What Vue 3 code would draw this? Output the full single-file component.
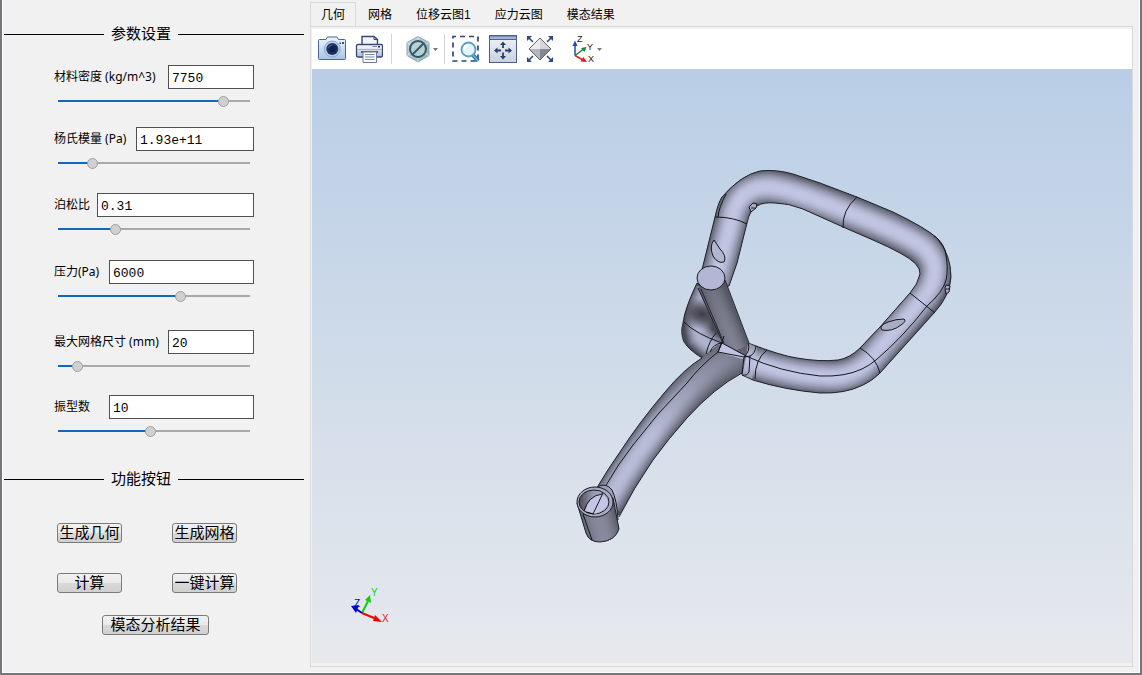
<script setup>
import { reactive, ref } from 'vue'

const fields = reactive([
  { id: 'density', label: '材料密度 (kg/m^3)', value: '7750', pos: 885, size: 'wide' },
  { id: 'young', label: '杨氏模量 (Pa)', value: '1.93e+11', pos: 160, size: 'medium' },
  { id: 'poisson', label: '泊松比', value: '0.31', pos: 285, size: 'narrow' },
  { id: 'pressure', label: '压力(Pa)', value: '6000', pos: 646, size: 'short' },
  { id: 'mesh', label: '最大网格尺寸 (mm)', value: '20', pos: 75, size: 'wide' },
  { id: 'modes', label: '振型数', value: '10', pos: 480, size: 'short' },
])

const tabs = ['几何', '网格', '位移云图1', '应力云图', '模态结果']
const active = ref(0)

// Concentric strokes, dark at the rim and light at the core, that shade a tube.
function shades(width, from, to, steps = 16) {
  return Array.from({ length: steps }, (_, i) => {
    const t = i / (steps - 1)
    const k = Math.sin((t * Math.PI) / 2)
    const mix = from.map((c, n) => Math.round(c + (to[n] - c) * k))
    return { w: (width * (1 - t * 0.92)).toFixed(1), c: `rgb(${mix.join(',')})` }
  })
}

const rim = [80, 82, 96]
const ringShades = shades(36, rim, [193, 197, 226])
const handleShades = shades(37, rim, [184, 188, 215])
const stemShades = shades(28, [78, 80, 94], [130, 132, 150])
const lobeShades = shades(30, [66, 68, 80], [176, 179, 206])
const cupShades = shades(40, [84, 86, 100], [136, 138, 156])

const ringTop =
  'M729 286 L737 263 L747 223 Q750 209 757 206 Q763 202 775 203 Q788 203 803 209 L843 227 L873 240 Q889 247 900 253 Q921 264 920 274 Q918 284 910 293 L880 327 L860 348 Q850 358 838 360 Q820 362 797 358 Q782 356 748 343 L742 375 L753 380 Q785 390 820 393 Q845 394 863 385 Q872 381 880 373 L934 313 Q950 296 951 277 Q951 255 937 238 Q926 228 893 212 L857 197 L820 183 L793 174 Q776 169 760 171 Q741 175 722 197 Q718 203 715 217 L697 290 Z'
const ringAxis =
  'M713 290 L731 222 Q737 187 768 187 Q785 187 850 213 Q910 236 924 248 Q945 268 925 296 L870 360 Q855 377 830 377 Q790 376 742 359'
const handleLeft = 'Q684 369 665 392 Q638 424 620 452 Q608 469 598 486'
const handleRight = 'L619 517 Q633 489 653 460 Q669 438 687 418 Q714 388 742 373'
const handle = `M718 345 L702 358 ${handleLeft} L612 500 ${handleRight} L748 345 Z`
const handleAxis = 'M740 352 Q709 366 678 402 Q640 446 606 503'
const lobe = 'M697 283 Q690 298 687 307 Q684 315 683 323 Q680 333 684 342 Q689 350 702 358 L722 352 L725 340 L705 290 Z'
const lobeAxis = 'M707 290 Q694 320 700 337 Q712 349 730 357'
const stem = 'M698 288 L723 343 L721 349 L744 355 L749 343 L725 280 Z'
const cup = 'M577 503 L586 533 Q589 542 600 542 Q615 541 619 529 L613 498 Z'
</script>

<template>
  <main class="window">
    <aside class="sidebar">
      <h2 class="title"><span>参数设置</span></h2>
      <form class="fields" @submit.prevent>
        <div v-for="f in fields" :key="f.id" class="field">
          <div class="line">
            <label :for="f.id" :class="f.size">{{ f.label }}</label>
            <input :id="f.id" v-model="f.value" type="text" class="box" />
          </div>
          <input
            v-model.number="f.pos"
            type="range"
            min="0"
            max="1000"
            class="slider"
            :aria-label="f.label"
            :style="{ '--fill': f.pos / 10 + '%' }"
          />
        </div>
      </form>
      <h2 class="title"><span>功能按钮</span></h2>
      <div class="actions">
        <button type="button">生成几何</button>
        <button type="button">生成网格</button>
        <button type="button">计算</button>
        <button type="button">一键计算</button>
        <button type="button" class="result">模态分析结果</button>
      </div>
    </aside>

    <section class="work">
      <nav class="tabs" role="tablist">
        <button
          v-for="(t, i) in tabs"
          :key="t"
          type="button"
          role="tab"
          class="tab"
          :class="{ on: active === i }"
          :aria-selected="active === i"
          @click="active = i"
        >{{ t }}</button>
      </nav>

      <div class="pane">
        <div class="toolbar">
          <div class="group">
            <button type="button" class="tool" aria-label="截图">
              <svg width="28" height="28" viewBox="0 0 28 28">
                <defs>
                  <linearGradient id="cam" x1="0" y1="0" x2="0" y2="1">
                    <stop offset="0" stop-color="#eef5fc" /><stop offset="1" stop-color="#aac4e2" />
                  </linearGradient>
                </defs>
                <path d="M1.5 4.5H8L9.5 2H19L20.5 4.5H26.5Q27.500 4.500 27.500 5.500V23.500Q27.500 24.500 26.500 24.500H1.500Q.5 24.500.5 23.500V5.500Q.5 4.500 1.500 4.500Z" fill="url(#cam)" stroke="#4d6796" />
                <circle cx="14.300" cy="14" r="8" fill="#b9cce4" stroke="#90a8ca" />
                <circle cx="14.300" cy="14" r="6" fill="#1b3264" />
                <circle cx="14.300" cy="14" r="3.500" fill="#0f2250" />
                <path d="M10.500 12.500Q12 10 14.500 10" fill="none" stroke="#4b6aa5" stroke-width="1.200" />
                <rect x="21.500" y="7.500" width="1.500" height="1.500" fill="#34538a" />
                <rect x="24" y="7" width="2" height="2" fill="#34538a" />
              </svg>
            </button>
            <button type="button" class="tool" aria-label="打印">
              <svg width="28" height="28" viewBox="0 0 28 28">
                <defs>
                  <linearGradient id="prn" x1="0" y1="0" x2="0" y2="1">
                    <stop offset="0" stop-color="#fff" /><stop offset="1" stop-color="#aeb9cd" />
                  </linearGradient>
                </defs>
                <path d="M7 10V1.500H19L22.500 4.500V10Z" fill="#f2f4f8" stroke="#384873" stroke-width="1.400" />
                <path d="M19 1.500V4.500H22.500" fill="none" stroke="#384873" />
                <rect x="1.500" y="9.500" width="26" height="12.500" rx="1.500" fill="url(#prn)" stroke="#384873" stroke-width="1.300" />
                <path d="M2 14.500H27" stroke="#a9b3c8" />
                <path d="M17.500 11.500H22" stroke="#7b88a8" />
                <rect x="23" y="11" width="2" height="1.500" fill="#24335f" />
                <path d="M6 17H23" stroke="#24335f" stroke-width="1.500" />
                <path d="M8 17H21.500V27.500H8Z" fill="#f8f9fb" stroke="#6f7d9c" />
                <path d="M10 19.500H19.500M10 22H19.500M10 24.500H19.500" stroke="#7d89a5" />
              </svg>
            </button>
          </div>
          <div class="group drop">
            <button type="button" class="tool" aria-label="显示选项">
              <svg width="28" height="28" viewBox="0 0 28 28">
                <defs>
                  <linearGradient id="hex" x1="0" y1="0" x2="1" y2="1">
                    <stop offset="0" stop-color="#c4dce1" /><stop offset="1" stop-color="#8fb0b9" />
                  </linearGradient>
                </defs>
                <path d="M14 1.500L25 7.500V20.500L14 27L3 20.500V7.500Z" fill="url(#hex)" stroke="#93a3aa" />
                <path d="M14 1.500V27M3 7.500L25 20.500M25 7.500L3 20.500" stroke="#d5e4e7" stroke-width=".8" />
                <circle cx="14" cy="14" r="8" fill="#b8d0d5" stroke="#345765" stroke-width="2" />
                <path d="M19.500 8.500L8.500 19.500" stroke="#345765" stroke-width="2" />
              </svg>
            </button>
            <svg class="caret" width="5" height="3" viewBox="0 0 5 3"><path d="M0 0H5L2.500 3Z" fill="#777" /></svg>
          </div>
          <div class="group last">
            <button type="button" class="tool" aria-label="框选缩放">
              <svg width="28" height="28" viewBox="0 0 28 28">
                <rect x="1" y="1.500" width="25" height="24.500" fill="none" stroke="#31456f" stroke-width="1.700" stroke-dasharray="5 4" stroke-dashoffset="2" />
                <path d="M21 20L26 26" stroke="#2b76ae" stroke-width="4" />
                <path d="M21 20L26 26" stroke="#6ab4df" stroke-width="1.500" />
                <circle cx="16.500" cy="14.500" r="7" fill="#e3f3fb" stroke="#5d9fc7" stroke-width="1.800" />
                <path d="M12.500 14.500Q12.500 11 16 10.500" fill="none" stroke="#fff" stroke-width="2" />
              </svg>
            </button>
            <button type="button" class="tool" aria-label="平移">
              <svg width="28" height="28" viewBox="0 0 28 28">
                <defs>
                  <linearGradient id="pan" x1="0" y1="0" x2="0" y2="1">
                    <stop offset="0" stop-color="#f0f3f8" /><stop offset="1" stop-color="#c9d1e0" />
                  </linearGradient>
                </defs>
                <rect x=".5" y=".5" width="27" height="27" fill="url(#pan)" stroke="#4b6089" />
                <rect x="1" y="1" width="26" height="4" fill="#a3b6d6" />
                <path d="M1 1H27M1 4.500H27" stroke="#4e6594" />
                <path d="M14 9V13M14 17.500V21.500M7.500 15.500H12M16 15.500H20.500" stroke="#2b4069" stroke-width="1.800" />
                <path d="M14 6.500L17 10H11ZM14 24.500L17 21H11ZM5 15.500L8.500 12.500V18.500ZM23 15.500L19.500 12.500V18.500Z" fill="#2b4069" />
              </svg>
            </button>
            <button type="button" class="tool" aria-label="适应窗口">
              <svg width="28" height="28" viewBox="0 0 28 28">
                <path d="M14 3L25 14H3Z" fill="#ececee" />
                <path d="M14 3V14H25Z" fill="#d5d6d9" />
                <path d="M3 14H14V25Z" fill="#b4b6bb" />
                <path d="M14 14H25L14 25Z" fill="#85888f" />
                <path d="M14 3L25 14L14 25L3 14Z" fill="none" stroke="#5c6577" />
                <path d="M2 2L7 7M26 2L21 7M2 26L7 21M26 26L21 21" stroke="#31487a" stroke-width="1.600" />
                <path d="M1 1H6L1 6ZM27 1V6L22 1ZM1 27V22L6 27ZM27 27H22L27 22Z" fill="#31487a" />
              </svg>
            </button>
            <button type="button" class="tool axes" aria-label="视图方向">
              <svg width="26" height="28" viewBox="0 0 26 28">
                <path d="M5 20.500V8" stroke="#2747a5" stroke-width="1.500" />
                <path d="M5 5.500L7.500 11H2.500Z" fill="#2747a5" />
                <path d="M5 20.500L13 14.500" stroke="#168543" stroke-width="1.500" />
                <path d="M16.500 12L14.500 17L11 13Z" fill="#168543" />
                <path d="M5 20.500L13 25" stroke="#e0211d" stroke-width="1.500" />
                <path d="M17 27L10.500 26.500L13.500 22Z" fill="#e0211d" />
                <text x="7" y="7" class="mark">Z</text>
                <text x="17" y="15" class="mark">Y</text>
                <text x="18" y="27" class="mark">X</text>
              </svg>
            </button>
            <svg class="caret" width="5" height="3" viewBox="0 0 5 3"><path d="M0 0H5L2.500 3Z" fill="#777" /></svg>
          </div>
        </div>

        <div class="canvas">
          <svg class="model" viewBox="312 69 820 594" role="img" aria-label="几何模型">
            <defs>
              <clipPath id="cRing"><path :d="ringTop" /></clipPath>
              <clipPath id="cHandle"><path :d="handle" /></clipPath>
              <clipPath id="cLobe"><path :d="lobe" /></clipPath>
              <clipPath id="cStem"><path :d="stem" /></clipPath>
              <clipPath id="cCup"><path :d="cup" /></clipPath>
              <radialGradient id="dark" gradientUnits="userSpaceOnUse" cx="0" cy="0" r="1" gradientTransform="translate(702 314) rotate(12) scale(24 16)">
                <stop offset="0" stop-color="#3c3d46" /><stop offset=".4" stop-color="#474853" stop-opacity=".8" /><stop offset="1" stop-color="#50525f" stop-opacity="0" />
              </radialGradient>
              <linearGradient id="stemDark" gradientUnits="userSpaceOnUse" x1="712" y1="290" x2="735" y2="345">
                <stop offset="0" stop-color="#55565f" stop-opacity=".4" /><stop offset="1" stop-color="#777988" stop-opacity=".2" />
              </linearGradient>
              <linearGradient id="handleDark" gradientUnits="userSpaceOnUse" x1="738" y1="350" x2="650" y2="430">
                <stop offset="0" stop-color="#666876" stop-opacity=".75" /><stop offset="1" stop-color="#666876" stop-opacity="0" />
              </linearGradient>
              <linearGradient id="bore" x1="0" y1="0" x2="1" y2="0">
                <stop offset="0" stop-color="#4a4b56" /><stop offset=".45" stop-color="#9497ad" /><stop offset="1" stop-color="#b4b7d3" />
              </linearGradient>
            </defs>

            <g clip-path="url(#cRing)" fill="none">
              <path :d="ringTop" fill="#505260" />
              <path v-for="(s, i) in ringShades" :key="i" :d="ringAxis" :stroke="s.c" :stroke-width="s.w" />
            </g>
            <path :d="ringTop" class="edge" />

            <g clip-path="url(#cLobe)" fill="none">
              <path :d="lobe" fill="#4c4e5a" />
              <path v-for="(s, i) in lobeShades" :key="i" :d="lobeAxis" :stroke="s.c" :stroke-width="s.w" />
              <rect x="676" y="284" width="54" height="56" fill="url(#dark)" />
            </g>
            <path :d="lobe" class="edge" />

            <g clip-path="url(#cHandle)" fill="none">
              <path :d="handle" fill="#505260" />
              <path v-for="(s, i) in handleShades" :key="i" :d="handleAxis" :stroke="s.c" :stroke-width="s.w" />
              <path :d="handle" fill="url(#handleDark)" />
            </g>
            <path class="edge" :d="`M702 358 ${handleLeft} M619 517 ${handleRight}`" />

            <g clip-path="url(#cStem)" fill="none">
              <path :d="stem" fill="#5a5c69" />
              <path v-for="(s, i) in stemShades" :key="i" d="M708 280L736 350" :stroke="s.c" :stroke-width="s.w" />
              <path :d="stem" fill="url(#stemDark)" />
            </g>
            <path class="edge" d="M698 288L723 343M701 289L724 343M725 280L749 343" />
            <ellipse cx="711" cy="278" rx="14" ry="12" fill="#b3b7d5" class="rim" />

            <path d="M722 343L746 356L743 359L718 352Z" fill="#c0c4e2" />
            <path d="M748 343L757 347L752 379L742 375Z" fill="#b9bddb" opacity=".55" />
            <path class="seam" d="M722 343L746 356Q780 372 820 376Q845 377 862 369Q870 365 876 360M722 343L718 352L744 357L746 356M744 357L742 374M750 356L749 372Q747 376 742 375M748 343Q751 350 744 357M756 346Q755 354 750 356L744 357M767 350Q755 359 755 379M724 336L718 352M684 322Q696 334 722 343M716 333Q709 341 706 354M722 343Q713 344 710 352" />
            <path class="seam" d="M718 352Q700 366 687 383Q658 412 633 445Q618 464 605 487" />

            <path class="seam" d="M715 217Q734 217 747 224M857 197Q842 210 843 228M910 293L935 313M860 348Q876 357 880 373M876 360Q903 337 927 306Q943 292 946 280Q949 268 945 250Q941 240 934 236M718 217Q719 207 726 194" />
            <path class="seam" d="M714 240Q709 246 713 256Q718 264 724 262Q727 256 720 249Z" fill="#b3b6d0" />
            <path class="seam" d="M904 319Q907 321 901 325Q892 332 882 330Q878 326 888 322Q896 319 904 319Z" fill="#a9acc5" />
            <path class="seam" d="M749 207L753 203L757 204L756 208L751 212Z M751 208H755M946 285L950 286L949 292L946 294L945 288Z M946 289H950" fill="#a9acc5" />

            <path d="M597 487Q606 482 612 490Q617 500 618 520L608 510Z" fill="#9da0ba" class="rim" />
            <g clip-path="url(#cCup)" fill="none">
              <path :d="cup" fill="#555764" />
              <path v-for="(s, i) in cupShades" :key="i" d="M592 496L606 546" :stroke="s.c" :stroke-width="s.w" />
            </g>
            <path :d="cup" class="edge" />
            <path class="seam" d="M583 514L592 540" />
            <ellipse cx="595" cy="502" rx="18" ry="15" fill="#a7aac4" class="rim" />
            <ellipse cx="594" cy="502" rx="15" ry="12" fill="url(#bore)" class="rim" />
            <path d="M585 511Q588 498 600 494Q607 496 608 502Q607 511 594 514Z" fill="#c3c7e6" />
            <path class="seam" d="M584 511Q588 496 602 494M603 493L593 514M586 512L594 514" />

            <g stroke-width="2">
              <path d="M362 613L368 601" stroke="#0bd20b" />
              <path d="M370 595L371 603L365 600Z" fill="#0bd20b" />
              <path d="M362 613L374 618" stroke="#f00000" />
              <path d="M382 622L373 621L375 615Z" fill="#f00000" />
              <path d="M362 613L356 609" stroke="#0000d8" />
              <path d="M351 606L359 605L356 613Z" fill="#0000d8" />
            </g>
            <text x="371" y="596" class="axis" fill="#0bd20b">Y</text>
            <text x="382" y="622" class="axis" fill="#e02020">X</text>
            <text x="354" y="607" class="axis" fill="#0000d8">Z</text>
          </svg>
        </div>
      </div>
    </section>
  </main>
</template>

<style>
body {
  background: #f1f1f1;
}
</style>

<style scoped>
* {
  box-sizing: border-box;
}
.window {
  display: flex;
  min-height: 100vh;
  border: 2px solid #75757b;
  border-top: 0;
  background: #f1f1f1;
  box-shadow: inset 1px 0 #fff, inset -1px -1px #fff;
  color: #000;
  font-family: "Liberation Sans", "Noto Sans CJK SC", sans-serif;
}
.sidebar {
  flex: 0 0 308px;
  padding: 24px 6px 0 2px;
}
.title {
  display: flex;
  align-items: center;
  gap: 7px;
  margin: 0;
  font-size: 15px;
  font-weight: 400;
  line-height: 20px;
}
.title::before,
.title::after {
  content: "";
  height: 1px;
  background: #000;
}
.title::before {
  width: 100px;
}
.title::after {
  flex: 1;
}
.fields {
  display: grid;
  grid-template-columns: minmax(0, 1fr);
  grid-template-rows: 62px 66px 67px 70px 65px 74px;
  width: 200px;
  margin: 21px 0 0 50px;
}
.line {
  display: flex;
  align-items: center;
  height: 24px;
}
label {
  flex: none;
  font: 12px/24px "Noto Sans", "Noto Sans CJK SC", sans-serif;
  white-space: nowrap;
}
.wide {
  width: 114px;
}
.medium {
  width: 82px;
}
.narrow {
  width: 43px;
}
.short {
  width: 55px;
}
.box {
  flex: 1;
  width: 0;
  min-width: 0;
  height: 24px;
  padding: 2px 3px 0;
  border: 1px solid #505050;
  border-radius: 0;
  background: #fff;
  color: #000;
  font: 13px "Liberation Mono", monospace;
}
.slider {
  display: block;
  appearance: none;
  width: 192px;
  height: 12px;
  margin: 6px 4px 0;
  background: linear-gradient(90deg, #0f6abf var(--fill), #a9a9a9 var(--fill)) center / 100% 2px no-repeat;
}
.slider::-webkit-slider-thumb {
  appearance: none;
  width: 11px;
  height: 11px;
  border: 1px solid #a0a0a0;
  border-radius: 50%;
  background: #d0d0d0;
}
.actions {
  display: grid;
  grid-template-columns: 65px 65px;
  grid-template-rows: 50px 42px 20px;
  column-gap: 50px;
  align-items: start;
  margin: 34px 0 0 53px;
}
.actions button {
  height: 20px;
  padding: 0 0 2px;
  border: 1px solid #7b7b7b;
  border-radius: 3px;
  background: linear-gradient(#f1f1f1, #e9e9e9 50%, #d9d9d9 50%, #d0d0d0);
  color: #000;
  font: 15px/16px "Noto Sans CJK SC", sans-serif;
  white-space: nowrap;
}
.actions .result {
  grid-column: 1 / 3;
  width: 107px;
  margin-left: 45px;
}
.work {
  display: flex;
  flex: 1;
  flex-direction: column;
  min-width: 0;
  padding: 2px 7px 6px 0;
}
.tabs {
  display: flex;
  height: 24px;
}
.tab {
  padding: 2px 12px 0;
  border: 0;
  background: none;
  color: #000;
  font: 12px/22px "Liberation Sans", "Noto Sans CJK SC", sans-serif;
}
.tab.on {
  padding: 1px 10px 0;
  border: 1px solid #d8d8d8;
  border-bottom: 0;
}
.pane {
  display: flex;
  flex: 1;
  flex-direction: column;
  padding: 2px 0 3px 1px;
  border: 1px solid #d9d9d9;
}
.toolbar {
  display: flex;
  height: 40px;
  padding-left: 6px;
  background: #fff;
}
.group {
  display: flex;
  align-items: center;
  gap: 9px;
  padding-right: 8px;
}
.group.drop {
  gap: 1px;
  padding-left: 13px;
  padding-right: 6px;
}
.group.last {
  padding-left: 8px;
}
.group + .group {
  background: linear-gradient(#d4d4d4, #d4d4d4) left center / 1px 30px no-repeat;
}
.tool {
  display: block;
  padding: 0;
  border: 0;
  background: none;
}
.tool svg {
  display: block;
}
.axes {
  margin-left: 7px;
}
.axes + .caret {
  margin-left: -8px;
}
.mark {
  font: 9px "Liberation Sans", sans-serif;
  fill: #222;
}
.canvas {
  display: flex;
  flex: 1;
  background: linear-gradient(#b9cee6, #e7e9ed);
}
.model {
  flex: 1;
  width: 100%;
  min-width: 0;
}
.edge {
  fill: none;
  stroke: #25262c;
  stroke-width: 1;
}
.rim {
  stroke: #191a1e;
  stroke-width: 1;
}
.seam {
  stroke: #15161a;
  stroke-width: 1;
}
.seam:not([fill]) {
  fill: none;
}
.axis {
  font: 10px "Liberation Sans", sans-serif;
}
</style>
